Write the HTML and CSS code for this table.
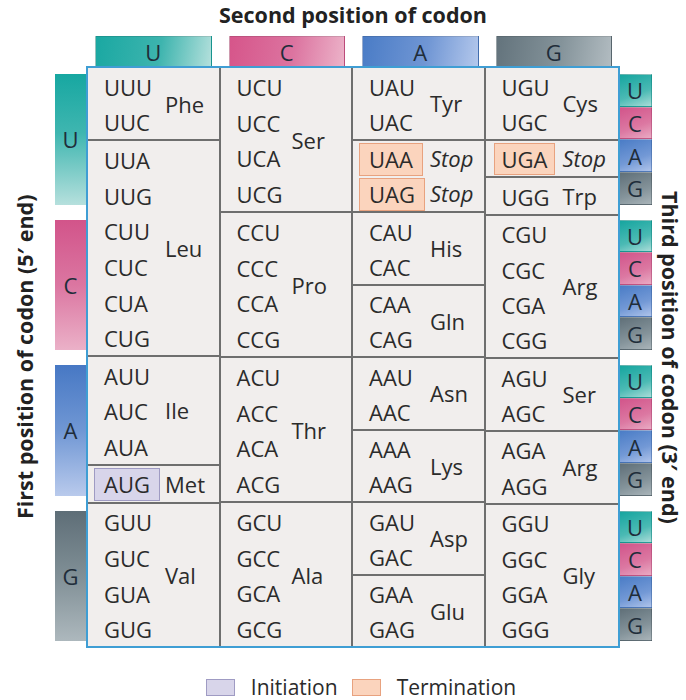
FILE: index.html
```html
<!DOCTYPE html>
<html>
<head>
<meta charset="utf-8">
<link rel="stylesheet" href="styles.css">
</head>
<body>
<div class="page">
  <div class="title">Second position of codon</div>
  <div class="top-tabs">
    <div class="tcell"><div class="tab t-u">U</div></div>
    <div class="tcell"><div class="tab t-c">C</div></div>
    <div class="tcell"><div class="tab t-a">A</div></div>
    <div class="tcell"><div class="tab t-g">G</div></div>
  </div>

  <div class="side-label left-label">First position of codon (5′ end)</div>

  <div class="left-tabs">
    <div class="lcell"><div class="ltab l-u">U</div></div>
    <div class="lcell"><div class="ltab l-c">C</div></div>
    <div class="lcell"><div class="ltab l-a">A</div></div>
    <div class="lcell"><div class="ltab l-g">G</div></div>
  </div>

  <div class="table">
    <div class="col">
      <div class="grp g2"><div class="codons"><div class="cd">UUU</div><div class="cd">UUC</div></div><div class="aa">Phe</div></div>
      <div class="grp g6"><div class="codons"><div class="cd">UUA</div><div class="cd">UUG</div><div class="cd">CUU</div><div class="cd">CUC</div><div class="cd">CUA</div><div class="cd">CUG</div></div><div class="aa">Leu</div></div>
      <div class="grp g3"><div class="codons"><div class="cd">AUU</div><div class="cd">AUC</div><div class="cd">AUA</div></div><div class="aa">Ile</div></div>
      <div class="grp g1"><div class="codons"><div class="cd"><span class="box init">AUG</span></div></div><div class="aa">Met</div></div>
      <div class="grp g4"><div class="codons"><div class="cd">GUU</div><div class="cd">GUC</div><div class="cd">GUA</div><div class="cd">GUG</div></div><div class="aa">Val</div></div>
    </div>
    <div class="col col-c">
      <div class="grp g4"><div class="codons"><div class="cd">UCU</div><div class="cd">UCC</div><div class="cd">UCA</div><div class="cd">UCG</div></div><div class="aa">Ser</div></div>
      <div class="grp g4"><div class="codons"><div class="cd">CCU</div><div class="cd">CCC</div><div class="cd">CCA</div><div class="cd">CCG</div></div><div class="aa">Pro</div></div>
      <div class="grp g4"><div class="codons"><div class="cd">ACU</div><div class="cd">ACC</div><div class="cd">ACA</div><div class="cd">ACG</div></div><div class="aa">Thr</div></div>
      <div class="grp g4"><div class="codons"><div class="cd">GCU</div><div class="cd">GCC</div><div class="cd">GCA</div><div class="cd">GCG</div></div><div class="aa">Ala</div></div>
    </div>
    <div class="col">
      <div class="grp g2"><div class="codons"><div class="cd">UAU</div><div class="cd">UAC</div></div><div class="aa">Tyr</div></div>
      <div class="grp g1 nb"><div class="codons"><div class="cd"><span class="box term">UAA</span></div></div><div class="aa stop">Stop</div></div>
      <div class="grp g1"><div class="codons"><div class="cd"><span class="box term">UAG</span></div></div><div class="aa stop">Stop</div></div>
      <div class="grp g2"><div class="codons"><div class="cd">CAU</div><div class="cd">CAC</div></div><div class="aa">His</div></div>
      <div class="grp g2"><div class="codons"><div class="cd">CAA</div><div class="cd">CAG</div></div><div class="aa">Gln</div></div>
      <div class="grp g2"><div class="codons"><div class="cd">AAU</div><div class="cd">AAC</div></div><div class="aa">Asn</div></div>
      <div class="grp g2"><div class="codons"><div class="cd">AAA</div><div class="cd">AAG</div></div><div class="aa">Lys</div></div>
      <div class="grp g2"><div class="codons"><div class="cd">GAU</div><div class="cd">GAC</div></div><div class="aa">Asp</div></div>
      <div class="grp g2"><div class="codons"><div class="cd">GAA</div><div class="cd">GAG</div></div><div class="aa">Glu</div></div>
    </div>
    <div class="col">
      <div class="grp g2"><div class="codons"><div class="cd">UGU</div><div class="cd">UGC</div></div><div class="aa">Cys</div></div>
      <div class="grp g1"><div class="codons"><div class="cd"><span class="box term small">UGA</span></div></div><div class="aa stop">Stop</div></div>
      <div class="grp g1"><div class="codons"><div class="cd">UGG</div></div><div class="aa">Trp</div></div>
      <div class="grp g4"><div class="codons"><div class="cd">CGU</div><div class="cd">CGC</div><div class="cd">CGA</div><div class="cd">CGG</div></div><div class="aa">Arg</div></div>
      <div class="grp g2"><div class="codons"><div class="cd">AGU</div><div class="cd">AGC</div></div><div class="aa">Ser</div></div>
      <div class="grp g2"><div class="codons"><div class="cd">AGA</div><div class="cd">AGG</div></div><div class="aa">Arg</div></div>
      <div class="grp g4"><div class="codons"><div class="cd">GGU</div><div class="cd">GGC</div><div class="cd">GGA</div><div class="cd">GGG</div></div><div class="aa">Gly</div></div>
    </div>
  </div>

  <div class="right-tabs">
    <div class="rcell"><div class="rtab r-u">U</div><div class="rtab r-c">C</div><div class="rtab r-a">A</div><div class="rtab r-g">G</div></div>
    <div class="rcell"><div class="rtab r-u">U</div><div class="rtab r-c">C</div><div class="rtab r-a">A</div><div class="rtab r-g">G</div></div>
    <div class="rcell"><div class="rtab r-u">U</div><div class="rtab r-c">C</div><div class="rtab r-a">A</div><div class="rtab r-g">G</div></div>
    <div class="rcell"><div class="rtab r-u">U</div><div class="rtab r-c">C</div><div class="rtab r-a">A</div><div class="rtab r-g">G</div></div>
  </div>

  <div class="side-label right-label">Third position of codon (3′ end)</div>

  <div class="legend">
    <div class="litem"><span class="lbox init"></span><span>Initiation</span></div>
    <div class="litem"><span class="lbox term"></span><span>Termination</span></div>
  </div>
</div>
</body>
</html>
```

FILE: styles.css
```css
html, body {
  margin: 0;
  padding: 0;
  background: #ffffff;
}
body {
  font-family: "Open Sans", "Noto Sans", sans-serif;
  color: #2b2b2b;
}
.page {
  width: 686px;
  height: 700px;
  display: grid;
  grid-template-columns: 55px 31px 534px 32px 34px;
  grid-template-rows: 36px 30px 582px 52px;
}
.title {
  grid-column: 3;
  grid-row: 1;
  text-align: center;
  font-weight: 700;
  font-size: 21.5px;
  line-height: 30px;
  color: #222;
}
.top-tabs {
  grid-column: 3;
  grid-row: 2;
  display: grid;
  grid-template-columns: repeat(4, 1fr);
}
.tcell {
  padding: 0 8px 0 9px;
}
.tab {
  height: 100%;
  box-sizing: border-box;
  border: 1px solid rgba(0,0,0,0.12);
  border-bottom: none;
  display: flex;
  align-items: center;
  justify-content: center;
  font-size: 22px;
  color: #1f2d3a;
}
.t-u { background: linear-gradient(100deg, #1aa8a2 0%, #3db4ae 55%, #b4e0dc 100%); }
.t-c { background: linear-gradient(100deg, #d6558a 0%, #dc74a0 55%, #ecb3c9 100%); }
.t-a { background: linear-gradient(100deg, #4a7cc6 0%, #7096d4 55%, #b4c8ec 100%); }
.t-g { background: linear-gradient(100deg, #63737c 0%, #84939a 55%, #b2bcc1 100%); }

.side-label {
  grid-row: 3;
  font-weight: 700;
  font-size: 21.5px;
  color: #222;
  display: flex;
  align-items: center;
  justify-content: center;
  white-space: nowrap;
  writing-mode: vertical-rl;
}
.left-label {
  grid-column: 1;
  transform: rotate(180deg);
  padding-left: 6px;
}
.right-label {
  grid-column: 5;
  padding-left: 2px;
}

.left-tabs {
  grid-column: 2;
  grid-row: 3;
  display: flex;
  flex-direction: column;
}
.lcell {
  flex: 1;
  padding: 8px 0 7px;
  display: flex;
}
.ltab {
  flex: 1;
  display: flex;
  align-items: center;
  justify-content: center;
  font-size: 22px;
  color: #1f2d3a;
}
.l-u { background: linear-gradient(180deg, #17a7a1 0%, #3fb6b0 45%, #b6e0dd 100%); }
.l-c { background: linear-gradient(180deg, #d2548a 0%, #db76a1 50%, #ebb1c8 100%); }
.l-a { background: linear-gradient(180deg, #4778c4 0%, #7097d4 50%, #b9caec 100%); }
.l-g { background: linear-gradient(180deg, #5e6e77 0%, #808f96 50%, #adb8bd 100%); }

.right-tabs {
  grid-column: 4;
  grid-row: 3;
  display: flex;
  flex-direction: column;
  margin-left: -2px;
}
.rcell {
  flex: 1;
  padding: 8px 0 7px;
  display: flex;
  flex-direction: column;
}
.rtab {
  flex: 1;
  display: flex;
  align-items: center;
  justify-content: center;
  font-size: 22px;
  color: #1f2d3a;
  box-sizing: border-box;
  border: 1px solid rgba(0,0,0,0.1);
}
.r-u { background: linear-gradient(160deg, #15a59f 0%, #4bbab4 60%, #a9dcd8 100%); }
.r-c { background: linear-gradient(160deg, #d2548a 0%, #dc78a2 60%, #e9aac3 100%); }
.r-a { background: linear-gradient(160deg, #4a7cc6 0%, #7399d6 60%, #aec3ea 100%); }
.r-g { background: linear-gradient(160deg, #5f6f78 0%, #84939a 60%, #a9b4b9 100%); }

.table {
  grid-column: 3;
  grid-row: 3;
  box-sizing: border-box;
  border: 2px solid #3f9ed4;
  background: #f1eeed;
  display: grid;
  grid-template-columns: repeat(4, 1fr);
  position: relative;
  z-index: 1;
}
.col {
  display: flex;
  flex-direction: column;
  border-right: 2px solid #6e6e6e;
}
.col:last-child {
  border-right: none;
}
.grp {
  display: flex;
  border-bottom: 2px solid #6e6e6e;
  min-height: 0;
}
.grp:last-child,
.grp.nb {
  border-bottom: none;
}
.g1 { flex: 1 1 0; }
.g2 { flex: 2 1 0; }
.g3 { flex: 3 1 0; }
.g4 { flex: 4 1 0; }
.g6 { flex: 6 1 0; }
.codons {
  width: 61px;
  padding-left: 16px;
  display: flex;
  flex-direction: column;
}
.col-c .codons {
  width: 55px;
}
.cd {
  flex: 1;
  display: flex;
  align-items: center;
  padding-top: 2px;
  font-size: 22px;
  color: #2b2b2b;
}
.aa {
  align-self: center;
  font-size: 22px;
  color: #2b2b2b;
}
.stop {
  font-style: italic;
}
.box {
  margin-left: -10px;
  padding: 0 9px 1px;
  border: 1px solid;
}
.box.term {
  background: #fbd4bd;
  border-color: #e8a27f;
}
.box.small {
  margin-left: -8px;
  padding: 0 7px;
}
.box.init {
  background: #d8d5ea;
  border-color: #9f9bc3;
}

.legend {
  grid-column: 1 / -1;
  grid-row: 4;
  display: flex;
  justify-content: center;
  align-items: flex-end;
  gap: 14px;
  padding-left: 36px;
  padding-bottom: 0;
  font-size: 21px;
  line-height: 26px;
  color: #2b2b2b;
}
.litem {
  display: flex;
  align-items: center;
  gap: 16px;
}
.lbox {
  width: 27px;
  height: 15px;
  border: 1px solid;
}
.lbox.init {
  background: #d8d5ea;
  border-color: #9f9bc3;
}
.lbox.term {
  background: #fbd4bd;
  border-color: #e8a27f;
}
```
